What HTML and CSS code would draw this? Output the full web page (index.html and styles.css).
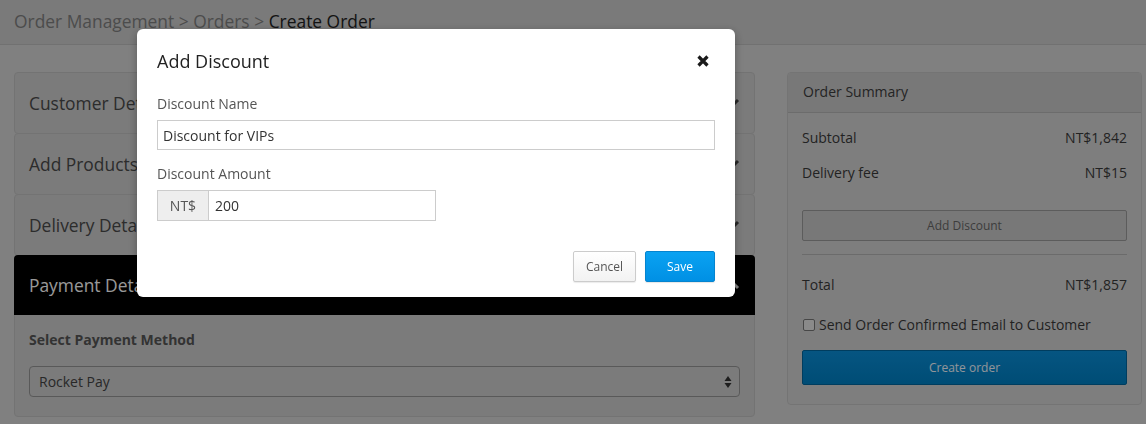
FILE: index.html
```html
<!DOCTYPE html>
<html lang="en">
<head>
<meta charset="utf-8">
<title>Create Order</title>
<link rel="stylesheet" href="styles.css">
</head>
<body>
<header class="topbar">
  <span class="crumb-muted">Order Management &gt; Orders &gt; </span><span class="crumb-current">Create Order</span>
</header>

<main class="layout">
  <section class="steps">
    <div class="step">
      <div class="step-head">
        <span>Customer Details</span>
        <svg class="chev" width="14" height="10" viewBox="0 0 14 10"><path d="M2 2 L7 7 L12 2" fill="none" stroke="currentColor" stroke-width="3"/></svg>
      </div>
    </div>
    <div class="step">
      <div class="step-head">
        <span>Add Products</span>
        <svg class="chev" width="14" height="10" viewBox="0 0 14 10"><path d="M2 2 L7 7 L12 2" fill="none" stroke="currentColor" stroke-width="3"/></svg>
      </div>
    </div>
    <div class="step">
      <div class="step-head">
        <span>Delivery Details</span>
        <svg class="chev" width="14" height="10" viewBox="0 0 14 10"><path d="M2 2 L7 7 L12 2" fill="none" stroke="currentColor" stroke-width="3"/></svg>
      </div>
    </div>
    <div class="step step-active">
      <div class="step-head">
        <span>Payment Details</span>
        <svg class="chev" width="14" height="10" viewBox="0 0 14 10"><path d="M2 8 L7 3 L12 8" fill="none" stroke="currentColor" stroke-width="3"/></svg>
      </div>
      <div class="step-body">
        <div class="field-title">Select Payment Method</div>
        <div class="select">
          <span>Rocket Pay</span>
          <svg width="8" height="14" viewBox="0 0 8 14"><path d="M4 1 L7.5 6 L0.5 6 Z M4 13 L7.5 8 L0.5 8 Z" fill="currentColor"/></svg>
        </div>
      </div>
    </div>
  </section>

  <aside class="summary">
    <div class="summary-head">Order Summary</div>
    <div class="summary-body">
      <div class="row"><span>Subtotal</span><span>NT$1,842</span></div>
      <div class="row"><span>Delivery fee</span><span>NT$15</span></div>
      <div class="btn-plain">Add Discount</div>
      <div class="divider"></div>
      <div class="row row-total"><span>Total</span><span>NT$1,857</span></div>
      <label class="check"><span class="box"></span>Send Order Confirmed Email to Customer</label>
      <div class="btn-create">Create order</div>
    </div>
  </aside>
</main>

<div class="backdrop"></div>

<div class="modal">
  <div class="modal-head">
    <h2 class="modal-title">Add Discount</h2>
    <svg class="close" width="12" height="12" viewBox="0 0 12 12"><path d="M1.5 1.5 L10.5 10.5 M10.5 1.5 L1.5 10.5" stroke="#1a1a1a" stroke-width="3.2" stroke-linecap="butt"/></svg>
  </div>
  <div class="modal-body">
    <div class="label">Discount Name</div>
    <div class="input">Discount for VIPs</div>
    <div class="label label-2">Discount Amount</div>
    <div class="input-group">
      <span class="addon">NT$</span>
      <span class="input-value">200</span>
    </div>
  </div>
  <div class="modal-foot">
    <div class="btn btn-cancel">Cancel</div>
    <div class="btn btn-save">Save</div>
  </div>
</div>
</body>
</html>
```

FILE: styles.css
```css
* { box-sizing: border-box; }

html, body {
  margin: 0;
  padding: 0;
}

body {
  width: 1146px;
  height: 424px;
  overflow: hidden;
  background: #d6d6d6;
  font-family: "Open Sans", "Liberation Sans", sans-serif;
  color: #333;
}

.topbar {
  height: 45px;
  padding: 9px 14px 0;
  font-size: 17.4px;
  line-height: 24px;
  background: #cbcbcb;
  border-bottom: 1px solid #bdbdbd;
}

.crumb-muted { color: #7f7f7f; }
.crumb-current { color: #222; }

.layout {
  display: grid;
  grid-template-columns: 741px 355px;
  column-gap: 32px;
  padding: 27px 4px 0 14px;
  align-items: start;
}

.steps {
  display: flex;
  flex-direction: column;
}

.step {
  background: #cdcdcd;
  border: 1px solid #c0c0c0;
  border-radius: 4px;
  margin-bottom: -1px;
}

.step-head {
  height: 60px;
  padding: 0 14px 1px 14px;
  display: flex;
  align-items: center;
  justify-content: space-between;
  font-size: 17.4px;
  color: #4a4a4a;
}

.chev { color: #444; }

.step-active .step-head {
  background: #000;
  color: #fff;
  border-radius: 4px 4px 0 0;
  margin: -1px -1px 0;
  padding: 0 15px;
}

.step-active .chev { color: #ddd; }

.step-body {
  padding: 15px 14px 19px;
}

.field-title {
  font-size: 14px;
  font-weight: 700;
  line-height: 20px;
  color: #555;
}

.select {
  margin-top: 16px;
  height: 31px;
  border: 1px solid #959595;
  border-radius: 4px;
  display: flex;
  align-items: center;
  justify-content: space-between;
  padding: 0 7px 0 9px;
  font-size: 14px;
  color: #444;
}

.select svg { color: #333; }

.summary {
  background: #d3d3d3;
  border: 1px solid #c2c2c2;
  border-radius: 4px;
}

.summary-head {
  height: 40px;
  padding: 0 15px 2px;
  display: flex;
  align-items: center;
  font-size: 14px;
  color: #3c3c3c;
  background: #c8c8c8;
  border-bottom: 1px solid #b4b4b4;
  border-radius: 4px 4px 0 0;
}

.summary-body {
  padding: 15px 14px 19px;
  font-size: 14px;
  color: #3a3a3a;
}

.row {
  display: flex;
  justify-content: space-between;
  line-height: 20px;
  height: 35px;
}

.btn-plain {
  margin-top: 12px;
  height: 31px;
  display: flex;
  align-items: center;
  justify-content: center;
  font-size: 12px;
  color: #666;
  background: #c9c9c9;
  border: 1px solid #999;
  border-radius: 2px;
}

.divider {
  height: 1px;
  background: #b2b2b2;
  margin: 13px 0 20px;
}

.row-total { height: 40px; }

.check {
  display: flex;
  align-items: center;
  line-height: 20px;
  color: #3a3a3a;
}

.box {
  width: 12px;
  height: 12px;
  border: 1px solid #777;
  border-radius: 2px;
  background: #e6e6e6;
  margin: 0 4px 0 1px;
}

.btn-create {
  margin-top: 15px;
  height: 35px;
  display: flex;
  align-items: center;
  justify-content: center;
  font-size: 12px;
  color: #f2f8ff;
  background: linear-gradient(#0a8ed8, #0080c4);
  border: 1px solid #00679f;
  border-radius: 2px;
}

.backdrop {
  position: fixed;
  inset: 0;
  background: rgba(0, 0, 0, 0.4);
}

.modal {
  position: fixed;
  left: 137px;
  top: 29px;
  width: 598px;
  height: 268px;
  background: #fff;
  border-radius: 6px;
  box-shadow: 0 3px 10px rgba(0, 0, 0, 0.3);
  padding: 20px 20px 15px;
}

.modal-head {
  display: flex;
  align-items: center;
  justify-content: space-between;
  height: 24px;
}

.modal-title {
  margin: 0;
  font-size: 18px;
  font-weight: 400;
  line-height: 24px;
  color: #222;
}

.close { margin-right: 6px; }

.modal-body {
  padding-top: 21px;
}

.label {
  font-size: 14px;
  line-height: 20px;
  color: #555;
}

.label-2 { margin-top: 14px; }

.input {
  margin-top: 6px;
  height: 30px;
  border: 1px solid #ccc;
  padding: 0 5px;
  display: flex;
  align-items: center;
  font-size: 14px;
  color: #333;
}

.input-group {
  margin-top: 6px;
  width: 279px;
  height: 31px;
  display: flex;
  border: 1px solid #ccc;
  font-size: 14px;
}

.addon {
  width: 51px;
  background: #eee;
  border-right: 1px solid #ccc;
  display: flex;
  align-items: center;
  justify-content: center;
  color: #555;
}

.input-value {
  display: flex;
  align-items: center;
  padding-left: 6px;
  color: #333;
}

.modal-foot {
  margin-top: 30px;
  display: flex;
  justify-content: flex-end;
  gap: 9px;
}

.btn {
  height: 31px;
  display: flex;
  align-items: center;
  justify-content: center;
  font-size: 12px;
  border-radius: 2px;
}

.btn-cancel {
  width: 63px;
  color: #555;
  background: linear-gradient(#fff, #f2f2f2);
  border: 1px solid #ccc;
  box-shadow: 0 1px 1px rgba(0, 0, 0, 0.08);
}

.btn-save {
  width: 70px;
  color: #fff;
  background: linear-gradient(#0aa2f2, #0090e4);
  border: 1px solid #0584cf;
  box-shadow: 0 1px 1px rgba(0, 0, 0, 0.1);
}
```
